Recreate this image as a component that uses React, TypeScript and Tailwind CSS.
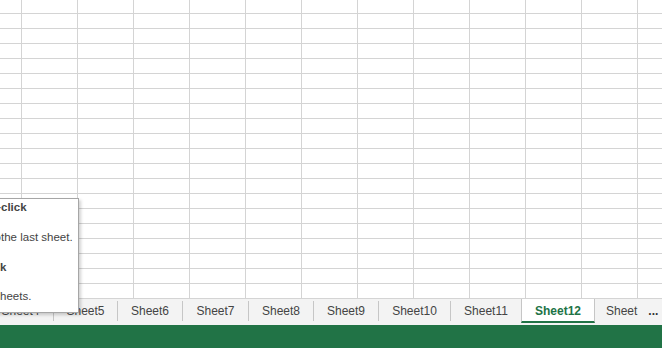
import React from "react";

const COLS = 12;
const ROWS = 20;

const tabs = [
  { name: "Sheet4", w: "w-[65px]" },
  { name: "Sheet5", w: "w-[63px]" },
  { name: "Sheet6", w: "w-[64px]" },
  { name: "Sheet7", w: "w-[65px]" },
  { name: "Sheet8", w: "w-[64px]" },
  { name: "Sheet9", w: "w-[64px]" },
  { name: "Sheet10", w: "w-[71px]" },
  { name: "Sheet11", w: "w-[70px]" },
];

function Grid() {
  return (
    <div className="flex flex-col h-[299px] overflow-hidden">
      {[...Array(ROWS)].map((_, r) => (
        <div
          key={r}
          className={`flex shrink-0 border-b border-[#d4d4d4] ${r === 0 ? "h-[14px]" : "h-[15px]"}`}
        >
          <div className="w-[22px] shrink-0 border-r border-[#d4d4d4]" />
          {[...Array(COLS)].map((_, c) => (
            <div key={c} className="w-[56px] shrink-0 border-r border-[#d4d4d4]" />
          ))}
        </div>
      ))}
    </div>
  );
}

// prefix that hangs off to the left of the line start
function Hidden({ children }: { children: React.ReactNode }) {
  return <span className="inline-flex justify-end w-0 whitespace-nowrap">{children}</span>;
}

function Tooltip() {
  return (
    <div className="absolute left-[-60px] top-[198px] w-[139px] h-[115px] bg-white border border-[#a6a6a6] shadow-[2px_2px_3px_rgba(0,0,0,0.18)] pl-[60px] pt-[1px] text-[11.5px] leading-[15px] text-[#444444]">
      <div className="flex flex-col gap-[15px] whitespace-nowrap">
        <div className="font-bold">
          <Hidden>Ctrl+ </Hidden>click
        </div>
        <div>
          <Hidden>Scroll to </Hidden>the last sheet.
        </div>
        <div className="font-bold -ml-[1px]">
          <Hidden>Right-clic</Hidden>k
        </div>
        <div className="-ml-[1px] -mt-[1px]">
          <Hidden>See all s</Hidden>heets.
        </div>
      </div>
    </div>
  );
}

function TabBar() {
  return (
    <div className="flex h-[26px] bg-[#f3f3f3] text-[12px] text-[#444444] overflow-hidden">
      <div className="flex shrink-0 -ml-[12px]">
        {tabs.map((t, i) => (
          <React.Fragment key={t.name}>
            {i > 0 && <div className="w-px h-[20px] mt-[2px] bg-[#c6c6c6] shrink-0" />}
            <div className={`${t.w} shrink-0 h-[22px] pt-[2px] flex items-center justify-center`}>{t.name}</div>
          </React.Fragment>
        ))}
      </div>
      <div className="w-[74px] shrink-0 h-[24px] pt-[1px] bg-white border-x border-[#c6c6c6] border-b-2 border-b-[#217346] flex items-center justify-center font-bold text-[#217346]">
        Sheet12
      </div>
      <div className="flex-1 h-[22px] pt-[2px] flex items-center pl-[11px] whitespace-nowrap">
        <span>Sheet</span>
        <span className="ml-[11px] font-bold text-[#333333]">...</span>
      </div>
    </div>
  );
}

export default function App() {
  return (
    <div
      className="relative w-[662px] h-[348px] bg-white overflow-hidden"
      style={{ fontFamily: '"Liberation Sans", Arial, sans-serif' }}
    >
      <Grid />
      <TabBar />
      <div className="h-[23px] bg-[#217346]" />
      <Tooltip />
    </div>
  );
}
